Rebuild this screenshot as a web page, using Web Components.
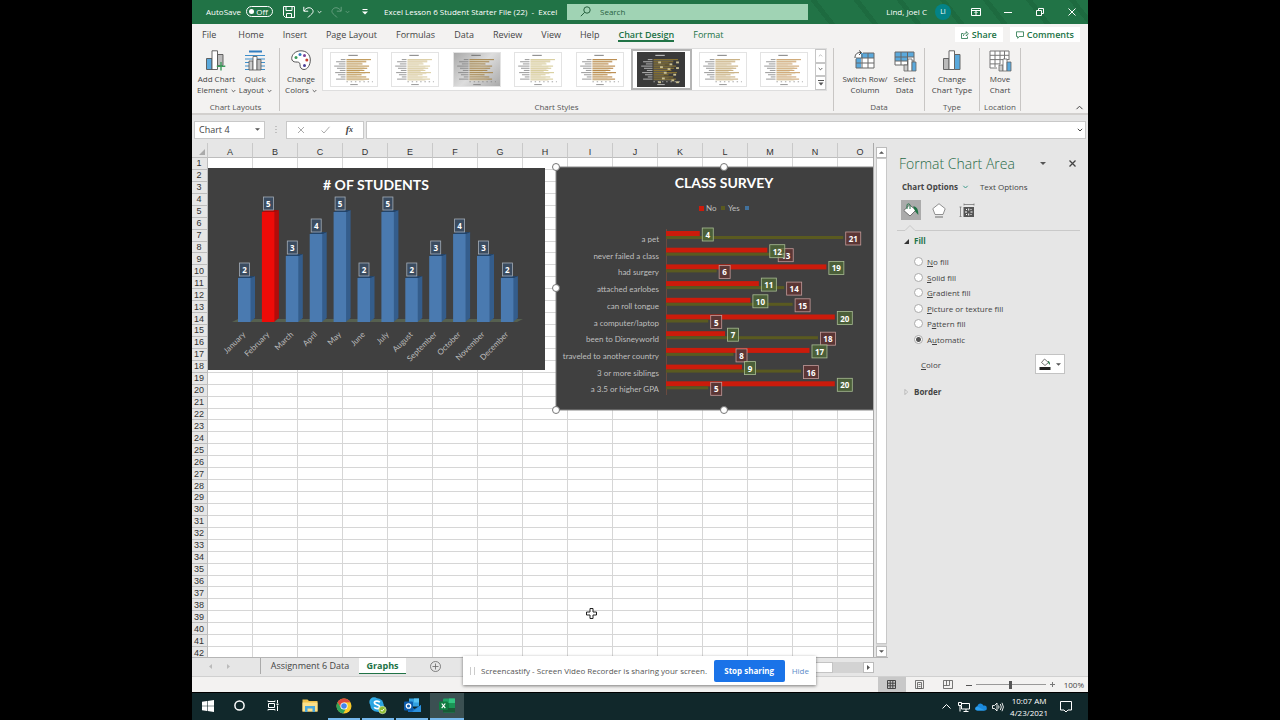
<!DOCTYPE html>
<html lang="en">
<head>
<meta charset="utf-8">
<title>Excel Lesson 6 Student Starter File (22) - Excel</title>
<style>
  html, body { height: 100%; margin: 0; }
  body {
    background: #000;
    color: #444;
    font: 8px/11px "Open Sans", "Noto Sans", sans-serif;
  }
</style>
</head>
<body>
<desktop-screen>
  <title-bar></title-bar>
  <ribbon-tabs></ribbon-tabs>
  <ribbon-panel></ribbon-panel>
  <formula-bar></formula-bar>
  <work-area>
    <sheet-grid>
      <students-chart></students-chart>
      <survey-chart></survey-chart>
    </sheet-grid>
    <sheet-tabs slot="tabs"></sheet-tabs>
    <format-pane slot="pane"></format-pane>
  </work-area>
  <status-bar></status-bar>
  <task-bar></task-bar>
  <share-notice slot="overlay"></share-notice>
</desktop-screen>

<script>
(function() {
  const BASE = `
    :host, *, *::before, *::after { box-sizing: border-box; }
    :host([hidden]) { display: none; }
    button, input { font: inherit; color: inherit; margin: 0; padding: 0; border: 0; background: none; }
    button { display: flex; align-items: center; justify-content: center; }
    a { color: inherit; text-decoration: none; }
    svg { display: block; flex: none; overflow: visible; }
  `;

  // define an element whose shadow root is a fixed piece of markup
  function define(name, css, html) {
    const template = document.createElement("template");
    template.innerHTML = `<style>${BASE}${css}</style>${html}`;
    customElements.define(name, class extends HTMLElement {
      constructor() {
        super();
        this.attachShadow({ mode: "open" });
        this.shadowRoot.appendChild(template.content.cloneNode(true));
      }
    });
  }

  const chevron = (w = 6, color = "currentColor") =>
    `<svg width="${w}" height="4" viewBox="0 0 6 4"><path d="M.8.8 3 3 5.2.8" fill="none" stroke="${color}"/></svg>`;
  const caret = (w = 6, color = "#555") =>
    `<svg width="${w}" height="3" viewBox="0 0 6 3"><path d="M0 0h6L3 3z" fill="${color}"/></svg>`;

  define("desktop-screen", `
    :host {
      display: grid;
      grid-template-rows: 24px 23px 68px 28px minmax(0, 1fr) 16px 28px;
      position: relative;
      height: 100vh;
      margin: 0 15%;
      overflow: hidden;
      background: #e6e6e6;
    }
    ::slotted([slot="overlay"]) { position: absolute; left: 271px; bottom: 35px; }
    .pointer { position: absolute; left: 394px; top: 608px; }
  `, `
    <slot></slot>
    <svg class="pointer" width="11" height="11" viewBox="0 0 11 11"><path d="M4 .5h3V4h3.500v3H7v3.500H4V7H.5V4H4z" fill="#fff" stroke="#222"/></svg>
    <slot name="overlay"></slot>
  `);

  define("title-bar", `
    :host {
      display: grid;
      grid-template-columns: 192fr 183fr 241fr 280fr;
      align-items: center;
      padding-bottom: 1px;
      background:
        repeating-linear-gradient(52deg, transparent 0 22px, rgba(0, 50, 20, .13) 22px 27px, transparent 27px 34px) right / 32% 100% no-repeat,
        #217346;
      color: #fff;
      white-space: nowrap;
    }
    .quick { display: flex; align-items: center; padding-left: 14px; }
    .toggle {
      width: 27px; height: 11px; margin: 0 10px 0 5px; padding: 0 4px 0 2px;
      border: 1px solid #fff; border-radius: 6px; justify-content: space-between;
    }
    .toggle::before { content: ""; width: 5px; height: 5px; border-radius: 50%; background: #fff; }
    .undo { margin-left: 8px; gap: 3px; }
    .redo { margin-left: 9px; gap: 3px; opacity: .3; }
    .more { margin-left: 12px; }
    .search {
      display: flex; align-items: center; gap: 9px; height: 16px; padding-left: 13px;
      background: #a0d3b4; color: #27613f;
    }
    .search input { flex: 1; min-width: 0; }
    .search input::placeholder { color: #27613f; opacity: 1; }
    .right { display: flex; align-items: center; justify-content: flex-end; padding-right: 11px; }
    .avatar {
      width: 16px; height: 16px; margin: 0 20px 0 8px; border-radius: 50%;
      background: #038387; font-size: 7px; line-height: 16px; text-align: center;
    }
    .right button { width: 10px; margin-left: 22px; }
    .right .avatar + button { margin-left: 0; }
  `, `
    <div class="quick">
      <span id="autosave">AutoSave</span>
      <button class="toggle" aria-labelledby="autosave">Off</button>
      <button aria-label="Save"><svg width="12" height="12" viewBox="0 0 12 12" fill="none" stroke="#fff"><path d="M.5.5h11v11h-9l-2-2zM3 .5v4h6v-4M3.500 11.500V7.500h5v4"/></svg></button>
      <button class="undo" aria-label="Undo"><svg width="11" height="12" viewBox="0 0 11 12" fill="none" stroke="#fff"><path d="M.8.8v4.400h4.400M1 5C3 1.500 7 .8 9 3s1 4-1 5.500L5 11.500"/></svg>${chevron(5)}</button>
      <button class="redo" aria-label="Redo"><svg width="11" height="12" viewBox="0 0 11 12" fill="none" stroke="#fff"><path d="M10.200.8v4.400H5.800M10 5C8 1.500 4 .8 2 3s-1 4 1 5.500l3 3"/></svg>${chevron(5)}</button>
      <button class="more" aria-label="Customize toolbar"><svg width="6" height="6" viewBox="0 0 6 6"><path d="M.5.5h5" stroke="#fff"/><path d="M0 2.500h6l-3 3z" fill="#fff"/></svg></button>
    </div>
    <div>Excel Lesson 6 Student Starter File (22)&nbsp; -&nbsp; Excel</div>
    <label class="search">
      <svg width="11" height="11" viewBox="0 0 11 11" fill="none" stroke="#27613f"><circle cx="7" cy="4" r="3.200"/><path d="M4.700 6.300.8 10.200"/></svg>
      <input type="text" placeholder="Search" aria-label="Search">
    </label>
    <div class="right">
      <span>Lind, Joel C</span>
      <span class="avatar">LI</span>
      <button aria-label="Ribbon display options"><svg width="10" height="8" viewBox="0 0 10 8" fill="none" stroke="#fff"><path d="M.5.5h9v7h-9zM.5 2.500h9M5 7V3.500M3.500 5 5 3.500 6.500 5"/></svg></button>
      <button aria-label="Minimize"><svg width="8" height="8" viewBox="0 0 8 8"><path d="M0 4.500h8" stroke="#fff"/></svg></button>
      <button aria-label="Restore"><svg width="8" height="8" viewBox="0 0 8 8" fill="none" stroke="#fff"><path d="M.5 2.500h5v5h-5zM2.500 2.500v-2h5v5h-2"/></svg></button>
      <button aria-label="Close"><svg width="8" height="8" viewBox="0 0 8 8"><path d="m.5.5 7 7m0-7-7 7" stroke="#fff"/></svg></button>
    </div>
  `);

  define("ribbon-tabs", `
    :host { display: flex; align-items: center; justify-content: space-between; padding: 0 8px 2px 10px; background: #f3f2f1; font-size: 9px; }
    nav { display: flex; gap: 19px; }
    nav a:first-child { margin-right: 3px; }
    .context { color: #217346; }
    [aria-current] { font-weight: 600; box-shadow: 0 2px #217346; }
    .actions { display: flex; gap: 7px; color: #217346; font-weight: 600; }
    .actions button { height: 15px; padding: 0 6px; gap: 3px; background: #fff; }
  `, `
    <nav>
      <a href="#">File</a><a href="#">Home</a><a href="#">Insert</a><a href="#">Page Layout</a>
      <a href="#">Formulas</a><a href="#">Data</a><a href="#">Review</a><a href="#">View</a><a href="#">Help</a>
      <a href="#" class="context" aria-current="page">Chart Design</a><a href="#" class="context">Format</a>
    </nav>
    <div class="actions">
      <button><svg width="8" height="8" viewBox="0 0 8 8" fill="none" stroke="#217346" stroke-width=".8"><path d="M2.500 2.500h-2v5h6v-2M2.300 5c.3-2 1.500-2.800 3-2.800V.6l2 2.200-2 2.200V3.600"/></svg>Share</button>
      <button><svg width="8" height="8" viewBox="0 0 8 8" fill="none" stroke="#217346" stroke-width=".8"><path d="M.5.8h7v4.700H3.200L1.700 7.300V5.500H.5z"/></svg>Comments</button>
    </div>
  `);

  define("ribbon-group", `
    :host {
      display: flex; flex-direction: column; justify-content: space-between;
      height: 63px; border-right: 1px solid #c8c6c4;
    }
    .items { display: flex; justify-content: center; }
    .caption { text-align: center; line-height: 9px; color: #555; }
  `, `
    <div class="items"><slot></slot></div>
    <div class="caption"><slot name="caption"></slot></div>
  `);

  define("ribbon-button", `
    :host { display: block; }
    button { flex-direction: column; width: 100%; padding-top: 2px; gap: 2px; white-space: nowrap; text-align: center; }
  `, `<button><slot name="icon"></slot><span><slot></slot></span></button>`);

  customElements.define("style-thumb", class extends HTMLElement {
    constructor() {
      super();
      this.attachShadow({ mode: "open" });
      let dark = this.hasAttribute("dark");
      let bars = [26, 21, 17, 24, 22, 19, 25, 16, 21, 24];
      let ink = dark ? "#ddd" : "#777";
      let tone = this.getAttribute("tone") || "#c09a5b";
      let art = bars.map((w, i) => {
        let y = 7 + i * 2.3;
        let name = 5 + (i * 5) % 8;
        return `<path d="M${15 - name} ${y}h${name}" stroke="${ink}" stroke-width=".8"/>` +
          `<path d="M16 ${y}h${w}" stroke="${tone}" stroke-width="1.200"/>` +
          `<path d="M16 ${y + 1.1}h${w - 5}" stroke="#d9c9a0" stroke-width=".8" opacity="${dark ? .3 : .8}"/>`;
      }).join("");
      if (dark) {
        art += [[22, 10], [41, 10], [24, 15], [34, 12], [32, 17], [28, 21], [41, 16], [38, 23], [26, 27], [41, 31], [22, 31], [36, 29]]
          .map(([x, y]) => `<rect x="${x - 1}" y="${y - 1}" width="3" height="2" fill="#c9bf91"/>`).join("");
      }
      this.shadowRoot.innerHTML = `
        <style>${BASE}
          :host { display: block; flex: 1; }
          button { width: 100%; height: 41px; border: 2px solid transparent; }
          :host([dark]) button { border-color: #b5b5b5; }
          svg { border: 1px solid #e3e3e3; background: #fff; }
          :host([gray]) svg { background: linear-gradient(135deg, #aaa, #ddd 50%, #aaa); }
          :host([dark]) svg { background: #3a3a3a; border-color: #3a3a3a; }
        </style>
        <button aria-label="Chart style"><svg width="48" height="35" viewBox="0 0 48 35">
          <path d="M18 2.500h10" stroke="${dark ? "#fff" : "#555"}" stroke-width=".8"/>${art}
          <path d="M16 30.500h28" stroke="${ink}" stroke-width=".7" stroke-dasharray="1.500 3"/>
          <path d="M20 33.500h8" stroke="${ink}" stroke-width=".8"/></svg></button>`;
    }
  });

  const bars = (x, y, blue) => `<g stroke="#666" stroke-width=".8"><path d="M${x} ${y + 6}h4v6h-4z" fill="#ccc"/><path d="M${x + 4} ${y}h4v12h-4z" fill="#fff"/><path d="M${x + 8} ${y + 3}h4v9h-4z" fill="${blue}"/></g>`;

  define("ribbon-panel", `
    :host { display: flex; align-items: flex-start; padding-top: 1px; background: #f3f2f1; border-bottom: 2px solid #d2d0ce; }
    .layouts { width: 88px; }
    .styles { flex: 1; }
    .data { width: 91px; }
    .type { width: 55px; }
    .location { width: 41px; }
    .quick { margin: 0 2px 0 3px; }
    .colors { width: 42px; }
    .select { margin-left: 6px; }
    .end { display: flex; align-items: flex-end; justify-content: flex-end; width: 67px; height: 62px; padding: 0 5px 0; }
    .arrow { display: inline-block; margin-left: 3px; vertical-align: middle; }
    .gallery { display: flex; align-items: center; flex: 1; height: 43px; margin-right: 6px; border: 1px solid #dedede; background: #fff; }
    .steps { display: grid; grid-template-rows: repeat(3, 1fr); width: 11px; height: 41px; }
    .steps button { border: 1px solid #c6c6c6; }
  `, `
    <ribbon-group class="layouts">
      <ribbon-button><svg slot="icon" width="20" height="21" viewBox="0 0 20 21"><g stroke="#555" stroke-width=".9"><path d="M.5 8.500h5.500v11H.5z" fill="#5aa9dc"/><path d="M6 .8h5.500v18.700H6z" fill="#fff"/><path d="M11.500 4.500H17v11h-5.500z" fill="#bbb"/></g><path d="M15 12v8.500M10.800 16.300h8.500" stroke="#3c9c5c" stroke-width="1.400"/></svg>Add Chart<br>Element<svg class="arrow" width="5" height="4" viewBox="0 0 6 4"><path d="M.8.8 3 3 5.200.8" fill="none" stroke="#444"/></svg></ribbon-button>
      <ribbon-button class="quick"><svg slot="icon" width="20" height="21" viewBox="0 0 20 21"><path d="M4 .5h13v2H4z" fill="#2f7dc0"/><path d="M0 5.500h20M0 9h20M0 12.500h20M0 16h20M0 19.500h20" stroke="#3f8fca"/><g stroke="#555" stroke-width=".8"><path d="M4 11h4v9H4z" fill="#ccc"/><path d="M8 6.500h4V20H8z" fill="#fff"/><path d="M12 9.500h4V20h-4z" fill="#bbb"/></g></svg>Quick<br>Layout<svg class="arrow" width="5" height="4" viewBox="0 0 6 4"><path d="M.8.8 3 3 5.200.8" fill="none" stroke="#444"/></svg></ribbon-button>
      <span slot="caption">Chart Layouts</span>
    </ribbon-group>
    <ribbon-group class="styles">
      <ribbon-button class="colors"><svg slot="icon" width="20" height="21" viewBox="0 0 20 21"><path d="M10 .8C4 .8.7 5 .7 8.500c0 2.400 2 3.500 4 3.500 2.600 0 4.300.2 4.300 2.500 0 2.500.8 5 4 5 3.500 0 6.300-4.500 6.300-9.500C19.300 4.500 15.500.8 10 .8z" fill="#fff" stroke="#555"/><circle cx="5" cy="7.500" r="1.500" fill="#3c9c5c"/><circle cx="9" cy="4.500" r="1.500" fill="#2f7dc0"/><circle cx="13.500" cy="5.500" r="1.500" fill="#7b3f98"/><circle cx="15.800" cy="10" r="1.500" fill="#c63d2f"/><circle cx="13.500" cy="15.500" r="1.500" fill="#4b3f98"/></svg>Change<br>Colors<svg class="arrow" width="5" height="4" viewBox="0 0 6 4"><path d="M.8.8 3 3 5.200.8" fill="none" stroke="#444"/></svg></ribbon-button>
      <div class="gallery">
        <style-thumb></style-thumb><style-thumb tone="#dccfa6"></style-thumb><style-thumb gray tone="#a88a55"></style-thumb><style-thumb tone="#d9cf9f"></style-thumb>
        <style-thumb tone="#b98a4c"></style-thumb><style-thumb dark tone="#8a7431"></style-thumb><style-thumb tone="#c9b184"></style-thumb><style-thumb tone="#cfa877"></style-thumb>
        <div class="steps">
          <button aria-label="Previous styles"><svg width="5" height="3" viewBox="0 0 6 4"><path d="M.8 3.200 3 1l2.200 2.200" fill="none" stroke="#aaa"/></svg></button>
          <button aria-label="Next styles">${chevron(5, "#444")}</button>
          <button aria-label="More styles"><svg width="6" height="6" viewBox="0 0 6 6"><path d="M0 .5h6" stroke="#555"/><path d="M.5 2.500h5l-2.500 3z" fill="#555"/></svg></button>
        </div>
      </div>
      <span slot="caption">Chart Styles</span>
    </ribbon-group>
    <ribbon-group class="data">
      <ribbon-button><svg slot="icon" width="22" height="21" viewBox="0 0 22 21"><path d="M2 3h18v15H2z" fill="#fff"/><path d="M7 3h13v5H7zM2 8h5v10H2z" fill="#5aa9dc"/><path d="M2 9v9h18V3H9M2 8h18M2 13h18M8 4v14M14 3v15" fill="none" stroke="#666"/><path d="M1 8c0-4 2-5.500 6-5.500M5 .5l2.500 2L5 5" fill="none" stroke="#444"/></svg>Switch Row/<br>Column</ribbon-button>
      <ribbon-button class="select"><svg slot="icon" width="22" height="21" viewBox="0 0 22 21"><path d="M1 2h19v13H1z" fill="#fff"/><path d="M1 2h19v5H1zM1 7h12v4H1z" fill="#5aa9dc"/><path d="M1 2h19v13H1zM1 7h19M1 11h19M7 2v13M13.500 2v13" fill="none" stroke="#666"/>${bars(10, 9, "#5aa9dc")}</svg>Select<br>Data</ribbon-button>
      <span slot="caption">Data</span>
    </ribbon-group>
    <ribbon-group class="type">
      <ribbon-button><svg slot="icon" width="20" height="21" viewBox="0 0 20 21" stroke="#666"><path d="M1.500 8.500H7v11H1.500z" fill="#bbb"/><path d="M7 .8h5.500v18.700H7z" fill="#fff"/><path d="M12.500 4.500H18v15h-5.500z" fill="#5aa9dc"/></svg>Change<br>Chart Type</ribbon-button>
      <span slot="caption">Type</span>
    </ribbon-group>
    <ribbon-group class="location">
      <ribbon-button><svg slot="icon" width="22" height="21" viewBox="0 0 22 21"><path d="M1 1h19v15h-9l-3 2.500H1z" fill="#fff"/><path d="M20 10V1H1v17h7M1 5.300h19M1 9.600h19M1 13.900h10M6 1v16M11 1v13M15.500 1v9" fill="none" stroke="#777"/>${bars(10, 9, "#5aa9dc")}</svg>Move<br>Chart</ribbon-button>
      <span slot="caption">Location</span>
    </ribbon-group>
    <div class="end"><button aria-label="Collapse ribbon"><svg width="7" height="5" viewBox="0 0 7 5"><path d="m.5 4.200 3-3 3 3" fill="none" stroke="#444"/></svg></button></div>
  `);

  define("formula-bar", `
    :host { display: flex; align-items: center; padding: 1px 2px 0; background: #e6e6e6; }
    .box { display: flex; align-items: center; height: 18px; border: 1px solid #c8c8c8; background: #fff; }
    .name { width: 71px; padding: 0 4px 0 4px; }
    .name input { flex: 1; min-width: 0; font-size: 9px; }
    .grip { width: 21px; display: flex; justify-content: center; }
    .tools { width: 78px; justify-content: space-around; padding: 0 2px; }
    .formula { flex: 1; margin-left: 2px; padding: 0 2px 0 5px; }
    .formula input { flex: 1; min-width: 0; }
    .fx { font: italic bold 10px/12px "Liberation Serif", serif; }
    .fx small { font-size: 8px; }
  `, `
    <div class="box name"><input type="text" value="Chart 4" aria-label="Name box"><button aria-label="Names">${caret(5)}</button></div>
    <div class="grip"><svg width="2" height="8" viewBox="0 0 2 8"><path d="M1 0v8" stroke="#999" stroke-dasharray="1 2"/></svg></div>
    <div class="box tools">
      <button aria-label="Cancel"><svg width="8" height="8" viewBox="0 0 8 8"><path d="m1 1 6 6m0-6L1 7" stroke="#aaa"/></svg></button>
      <button aria-label="Enter"><svg width="9" height="8" viewBox="0 0 9 8"><path d="m.5 4.500 2.500 2.500L8.500.8" fill="none" stroke="#aaa"/></svg></button>
      <button class="fx" aria-label="Insert function">f<small>x</small></button>
    </div>
    <div class="box formula"><input type="text" aria-label="Formula"><button aria-label="Expand formula bar">${chevron(6, "#444")}</button></div>
  `);

  define("work-area", `
    :host { display: grid; grid-template-columns: minmax(0, 1fr) 200px; min-height: 0; }
    .book { display: grid; grid-template-rows: minmax(0, 1fr) 19px; min-height: 0; }
    .sheet { display: grid; grid-template-columns: minmax(0, 1fr) 14px; min-height: 0; }
    .scroll { display: flex; flex-direction: column; margin: 4px 1px 0 2px; }
    .scroll button { height: 11px; border: 1px solid #bbb; background: #fff; }
    .thumb { flex: 0 0 486px; border: 1px solid #c8c8c8; background: #fff; }
    .rest { flex: 1; background: #d8d8d8; }
  `, `
    <div class="book">
      <div class="sheet">
        <slot></slot>
        <div class="scroll">
          <button aria-label="Scroll up"><svg width="5" height="3" viewBox="0 0 6 3"><path d="M0 3h6L3 0z" fill="#555"/></svg></button>
          <div class="thumb"></div><div class="rest"></div>
          <button aria-label="Scroll down">${caret(5)}</button>
        </div>
      </div>
      <slot name="tabs"></slot>
    </div>
    <slot name="pane"></slot>
  `);

  const ROWS = 42;
  const COLUMNS = "ABCDEFGHIJKLMNO".split("");

  customElements.define("sheet-grid", class extends HTMLElement {
    constructor() {
      super();
      this.attachShadow({ mode: "open" });
      let cells = "<td></td>".repeat(COLUMNS.length);
      let rows = Array.from({ length: ROWS }, (_, i) => `<tr><th scope="row">${i + 1}</th>${cells}</tr>`).join("");
      this.shadowRoot.innerHTML = `
        <style>${BASE}
          :host { display: block; position: relative; min-height: 0; overflow: hidden; border-right: 1px solid #aaa; background: #fff; }
          table { display: grid; grid-template-rows: 15px 1fr; height: calc(100% + 2px); }
          tbody { display: grid; grid-template-rows: repeat(${ROWS}, minmax(0, 1fr)); }
          tr { display: grid; grid-template-columns: 16px repeat(${COLUMNS.length}, 45px); min-height: 0; }
          th, td { padding: 0; min-height: 0; border: 0 solid #d6d6d6; border-width: 0 1px 1px 0; }
          th {
            display: flex; align-items: center; justify-content: center;
            background: #e6e6e6; border-color: #bdbdbd; color: #333;
            font: 9px/10px "Liberation Sans", Arial, sans-serif;
          }
          thead th { border-right-color: #c9c9c9; padding-top: 4px; }
          thead th:first-child { justify-content: flex-end; padding-right: 2px; }
          tbody th { padding-right: 1px; }
        </style>
        <table>
          <thead><tr><th aria-label="Select all"><svg width="6" height="6" viewBox="0 0 6 6"><path d="M6 0v6H0z" fill="#aaa"/></svg></th>${COLUMNS.map(c => `<th scope="col">${c}</th>`).join("")}</tr></thead>
          <tbody>${rows}</tbody>
        </table>
        <slot></slot>`;
    }
  });

  const MONTHS = [
    ["January", 2], ["February", 5], ["March", 3], ["April", 4], ["May", 5], ["June", 2],
    ["July", 5], ["August", 2], ["September", 3], ["October", 4], ["November", 3], ["December", 2]
  ];

  customElements.define("students-chart", class extends HTMLElement {
    constructor() {
      super();
      this.attachShadow({ mode: "open" });
      let columns = MONTHS.map(([month, n], i) => {
        let x = 30 + i * 23.9, top = 154 - n * 22;
        let [face, side, cap] = month === "February" ? ["#ee0b08", "#b00d0b", "#a80a08"] : ["#4a7ab0", "#345d8c", "#234469"];
        return `
          <path d="M${x + 12} ${top}l5-2v${n * 22 - 2}l-5 4z" fill="${side}"/>
          <path d="M${x} ${top}l4-2h13l-4 2z" fill="${cap}"/>
          <rect x="${x}" y="${top}" width="12.500" height="${n * 22}" fill="${face}"/>
          <rect x="${x + 1.5}" y="${top - 15}" width="10" height="13" fill="#3b4c60" stroke="#a3adb8" stroke-width=".8"/>
          <text class="value" x="${x + 6.5}" y="${top - 5}">${n}</text>
          <text class="month" transform="translate(${x + 8} 167) rotate(-45)">${month}</text>`;
      }).join("");
      this.shadowRoot.innerHTML = `
        <style>${BASE}
          :host { display: block; position: absolute; left: 16px; top: 25px; background: #404040; }
          text { font-family: Lato, "Open Sans", sans-serif; }
          .title { font-size: 14px; font-weight: 700; fill: #fff; text-anchor: middle; }
          .value { font: 700 8px "Open Sans", sans-serif; fill: #fff; text-anchor: middle; }
          .month { font-size: 8px; fill: #bdbdbd; text-anchor: end; }
        </style>
        <svg width="337" height="202" viewBox="0 0 337 202">
          <text class="title" x="168" y="22"># OF STUDENTS</text>
          <path d="M24 154l6-3h285l-6 3z" fill="#56604f"/>
          ${columns}
        </svg>`;
    }
  });

  // answer, no, yes
  const ANSWERS = [
    ["a pet", 4, 21], ["never failed a class", 12, 13], ["had surgery", 19, 6], ["attached earlobes", 11, 14],
    ["can roll tongue", 10, 15], ["a computer/laptop", 20, 5], ["been to Disneyworld", 7, 18],
    ["traveled to another country", 17, 8], ["3 or more siblings", 9, 16], ["a 3.5 or higher GPA", 20, 5]
  ];

  customElements.define("survey-chart", class extends HTMLElement {
    box(kind, n, y) {
      return `<rect class="${kind}" x="${112.5 + n * 8.44}" y="${y - 7}" width="${n > 9 ? 15 : 11}" height="13"/>`;
    }

    value(n, y) {
      return `<text class="value" x="${112.5 + n * 8.44 + (n > 9 ? 7.5 : 5.5)}" y="${y + 3}">${n}</text>`;
    }

    constructor() {
      super();
      this.attachShadow({ mode: "open" });
      let lines = ANSWERS.map(([answer, no, yes], i) => {
        let y = 67 + i * 16.7;
        return `
          <text class="answer" x="103" y="${y + 8}">${answer}</text>
          <rect x="110" y="${y - 3}" width="${no * 8.44}" height="5" fill="#cc1b0b"/>
          <rect x="110" y="${y + 2}" width="${yes * 8.44}" height="3" fill="#5a5a20"/>
          ${this.box("yes", yes, y + 5)}${this.value(yes, y + 5)}
          ${this.box("no", no, y + 1)}${this.value(no, y + 1)}`;
      }).join("");
      let handles = [[0, 0], [168, 0], [0, 121], [0, 243], [168, 243]]
        .map(([x, y]) => `<circle cx="${x}" cy="${y}" r="3.500" fill="#fff" stroke="#777"/>`).join("");
      this.shadowRoot.innerHTML = `
        <style>${BASE}
          :host { display: block; position: absolute; left: 364px; top: 24px; background: #404040; }
          text { font-family: Lato, "Open Sans", sans-serif; }
          .title { font-size: 14px; font-weight: 700; fill: #fff; text-anchor: middle; }
          .value { font: 700 8px "Open Sans", sans-serif; fill: #fff; text-anchor: middle; }
          .answer { font-size: 8px; fill: #bfbfbf; text-anchor: end; }
          .legend { font-size: 8px; fill: #bfbfbf; }
          .no { fill: #4f6a37; fill-opacity: .75; stroke: #a9bd93; stroke-width: .8; }
          .yes { fill: #5b3635; stroke: #c49b9a; stroke-width: .8; }
        </style>
        <svg width="336" height="243" viewBox="0 0 336 243">
          <path d="M0 0h336v243H0z" fill="none" stroke="#888"/>
          <text class="title" x="168" y="21">CLASS SURVEY</text>
          <rect x="143" y="39" width="5" height="5" fill="#cc1b0b"/><text class="legend" x="150" y="44">No</text>
          <rect x="165" y="39" width="4" height="4" fill="#5a5a20"/><text class="legend" x="172" y="44">Yes</text>
          <rect x="189" y="39" width="4" height="4" fill="#41719c"/>
          <path d="M110.500 62v166" stroke="#6b4a40"/>
          ${lines}
          ${handles}
        </svg>`;
    }
  });

  define("sheet-tabs", `
    :host { display: flex; align-items: flex-start; height: 19px; border-top: 1px solid #b5b5b5; background: #e6e6e6; font-size: 9px; }
    .nav { display: flex; gap: 15px; align-items: center; width: 69px; height: 16px; padding-left: 17px; border-right: 1px solid #aaa; }
    a { display: block; height: 16px; line-height: 16px; }
    .data { width: 98px; text-align: center; }
    .active { width: 47px; background: #fff; border-bottom: 1px solid #217346; color: #217346; font-weight: 700; text-align: center; }
    .add { width: 12px; height: 17px; margin-left: 23px; }
    .scroll { display: flex; align-items: center; width: 200px; height: 11px; margin: 4px 14px 0 auto; background: #d3d3d3; }
    .thumb { width: 159px; height: 11px; margin-right: auto; border: 1px solid #c4c4c4; background: #fff; }
    .scroll button { width: 11px; height: 11px; border: 1px solid #bbb; background: #fff; }
  `, `
    <div class="nav">
      <svg width="3" height="5" viewBox="0 0 3 5"><path d="M3 0v5L0 2.500z" fill="#bbb"/></svg>
      <svg width="3" height="5" viewBox="0 0 3 5"><path d="M0 0v5l3-2.500z" fill="#bbb"/></svg>
    </div>
    <a class="data" href="#">Assignment 6 Data</a>
    <a class="active" href="#" aria-current="page">Graphs</a>
    <button class="add" aria-label="New sheet"><svg width="11" height="11" viewBox="0 0 11 11" fill="none" stroke="#666" stroke-width=".8"><circle cx="5.500" cy="5.500" r="5"/><path d="M5.500 2.500v6M2.500 5.500h6"/></svg></button>
    <div class="scroll"><div class="thumb"></div><button aria-label="Scroll right"><svg width="3" height="5" viewBox="0 0 3 5"><path d="M0 0v5l3-2.500z" fill="#555"/></svg></button></div>
  `);

  define("format-pane", `
    :host { display: block; padding: 11px 8px 0 9px; background: #e6e6e6; }
    header { display: flex; align-items: center; padding: 0 4px 0 2px; }
    h2 { flex: 1; margin: 0; font: 300 14px/19px "Open Sans", "Noto Sans", sans-serif; color: #2a6b48; white-space: nowrap; }
    header button { width: 8px; height: 14px; }
    header button + button { margin-left: 21px; }
    .modes { display: flex; align-items: center; margin-top: 8px; padding-left: 5px; }
    .modes button { gap: 4px; }
    .modes .active { margin-right: 11px; font-weight: 700; }
    .icons { display: flex; gap: 8px; margin-top: 8px; padding-left: 4px; }
    .icons button { width: 20px; height: 20px; }
    .icons .active { background: #ababab; }
    .rule { display: block; width: 100%; height: 8px; margin-top: 3px; }
    h3 { display: flex; align-items: center; gap: 5px; margin: 0; padding-left: 7px; font: 700 8px/12px "Open Sans", "Noto Sans", sans-serif; }
    h3 svg { width: 5px; }
    .fill { margin-top: 4px; color: #217346; }
    fieldset { display: grid; grid-auto-rows: 1fr; height: 93px; margin: 7px 0 0; padding: 0 0 0 17px; border: 0; }
    label { display: flex; align-items: center; gap: 4px; }
    input[type="radio"] { appearance: none; width: 9px; height: 9px; border: 1px solid #aaa; border-radius: 50%; background: #fff; }
    input[type="radio"]:checked { background: radial-gradient(circle, #555 2px, #fff 3px); }
    .color { display: flex; align-items: center; justify-content: space-between; margin: 7px 15px 12px 24px; }
    .color button { width: 30px; height: 20px; gap: 5px; border: 1px solid #c3c3c3; background: #fff; }
  `, `
    <header>
      <h2>Format Chart Area</h2>
      <button aria-label="Pane options">${caret(6)}</button>
      <button aria-label="Close pane"><svg width="7" height="7" viewBox="0 0 7 7"><path d="m.5.5 6 6m0-6-6 6" stroke="#444" stroke-width="1.300"/></svg></button>
    </header>
    <div class="modes"><button class="active">Chart Options ${chevron(7, "#3a9a8a")}</button><button>Text Options</button></div>
    <div class="icons">
      <button class="active" aria-label="Fill and line"><svg width="16" height="14" viewBox="0 0 16 14"><path d="M6.500 2 13 7l-6 6L.8 7.500z" fill="#fff" stroke="#555" stroke-width=".8"/><path d="M4 6V2.500C4 .3 7 .3 7 2.500V6" fill="none" stroke="#217346"/><path d="M10 3.500c3-.5 5.500 2 5.300 8.500l-3-3.500z" fill="#217346"/></svg></button>
      <button aria-label="Effects"><svg width="14" height="15" viewBox="0 0 14 15"><path d="m7 .7 6.200 5L11 11.500H3L.8 5.700z" fill="#fff" stroke="#777" stroke-width=".8"/><path d="M3 14h8" stroke="#aaa" stroke-width="2"/></svg></button>
      <button aria-label="Size and properties"><svg width="14" height="14" viewBox="0 0 14 14"><path d="M.5 4v9.500m-1-9.500h2m-2 9.500h2M4 1.500h10M4 .5v2M14 .5v2" stroke="#777" stroke-width=".8"/><path d="M3.500 4H14v10H3.500z" fill="#555"/><path d="M8.700 5.500v2m0 3v2M5 9h2m3.500 0h2M6 6.500h1m3.500 0h1M6 11.500h1m3.500 0h1" stroke="#fff"/></svg></button>
    </div>
    <svg class="rule" preserveAspectRatio="none"><path d="M0 7.500h8l5-5 5 5h165" fill="none" stroke="#c9c9c9"/></svg>
    <h3 class="fill"><svg width="5" height="5" viewBox="0 0 5 5"><path d="M5 0v5H0z" fill="#333"/></svg>Fill</h3>
    <fieldset aria-label="Fill">
      <label><input type="radio" name="fill"><span><u>N</u>o fill</span></label>
      <label><input type="radio" name="fill"><span><u>S</u>olid fill</span></label>
      <label><input type="radio" name="fill"><span><u>G</u>radient fill</span></label>
      <label><input type="radio" name="fill"><span><u>P</u>icture or texture fill</span></label>
      <label><input type="radio" name="fill"><span>P<u>a</u>ttern fill</span></label>
      <label><input type="radio" name="fill" checked><span>A<u>u</u>tomatic</span></label>
    </fieldset>
    <div class="color"><span><u>C</u>olor</span><button aria-label="Color"><svg width="12" height="12" viewBox="0 0 12 12"><path d="m5.500 1 4 3.500-3.500 3-3.500-3z" fill="#fff" stroke="#555" stroke-width=".8"/><path d="M9 3c1.500.2 2 1.500 2 4L9.200 5z" fill="#217346"/><path d="M.5 9h11v3H.5z" fill="#222"/></svg>${caret(5)}</button></div>
    <h3><svg width="4" height="6" viewBox="0 0 4 6"><path d="M.5.5v5L3 3z" fill="#fff" stroke="#999" stroke-width=".7"/></svg>Border</h3>
  `);

  define("status-bar", `
    :host { display: flex; align-items: center; justify-content: flex-end; padding-right: 4px; border-top: 1px solid #d0d0d0; background: #f3f2f1; }
    .view { width: 28px; height: 15px; }
    .active { background: #c8c8c8; }
    .zoom { display: flex; align-items: center; gap: 4px; margin: 0 8px 0 4px; }
    .zoom button { width: 6px; height: 8px; }
    input { appearance: none; width: 70px; height: 8px; background: linear-gradient(#999, #999) center / 100% 1px no-repeat; }
    input::-webkit-slider-thumb { appearance: none; width: 3px; height: 8px; background: #555; }
  `, `
    <button class="view active" aria-label="Normal view"><svg width="9" height="9" viewBox="0 0 9 9"><path d="M.5.5h8v8h-8zM.5 3.200h8M.5 5.800h8M3.200.5v8M5.800.5v8" fill="none" stroke="#444"/></svg></button>
    <button class="view" aria-label="Page layout view"><svg width="9" height="9" viewBox="0 0 9 9"><path d="M.5.5h8v8h-8zM2.500 2.500h4v6h-4zM3.500 4.500h2m-2 2h2" fill="none" stroke="#555" stroke-width=".8"/></svg></button>
    <button class="view" aria-label="Page break view"><svg width="10" height="9" viewBox="0 0 10 9"><path d="M.5.5h9v8h-9zM.5 5.500h6v-5M3.500.5v5" fill="none" stroke="#555" stroke-width=".8"/></svg></button>
    <div class="zoom">
      <button aria-label="Zoom out"><svg width="6" height="6" viewBox="0 0 6 6"><path d="M0 3.500h6" stroke="#555"/></svg></button>
      <input type="range" min="0" max="200" value="100" aria-label="Zoom">
      <button aria-label="Zoom in"><svg width="5" height="5" viewBox="0 0 5 5"><path d="M0 2.500h5M2.500 0v5" stroke="#777"/></svg></button>
    </div>
    <span>100%</span>
  `);

  define("task-bar", `
    :host { display: flex; justify-content: space-between; border-top: 1px solid #000; background: #11282b; color: #fff; }
    .apps, .tray { display: flex; }
    .apps button { width: 34px; border-bottom: 2px solid transparent; }
    .apps .plain { width: 33px; }
    .apps .plain:first-child { width: 31px; }
    .apps .gap { margin-left: 4px; }
    .apps .open { border-image: linear-gradient(90deg, transparent 3px, #76b9ed 3px calc(100% - 3px), transparent 0) 2; }
    .apps .current { margin-left: 1px; background: #3b5052; border-color: #76b9ed; }
    .tray { align-items: center; padding-right: 16px; }
    .tray button { width: 17px; }
    .tray .news { width: 12px; }
    time { margin: 0 12px 0 4px; text-align: center; line-height: 12px; }
  `, `
    <div class="apps">
      <button class="plain" aria-label="Start"><svg width="12" height="12" viewBox="0 0 12 12"><path d="m0 1.700 5-.7v4.700H0zM5.600.9 12 0v5.700H5.600zM0 6.300h5V11l-5-.7zM5.600 6.300H12V12l-6.400-.9z" fill="#fff"/></svg></button>
      <button class="plain" aria-label="Cortana"><svg width="11" height="11" viewBox="0 0 11 11"><circle cx="5.500" cy="5.500" r="4.600" fill="none" stroke="#fff" stroke-width="1.500"/></svg></button>
      <button class="plain" aria-label="Task view"><svg width="12" height="11" viewBox="0 0 12 11" fill="none" stroke="#fff"><path d="M1 .5v1h7v-1M1.500 3.500h6v4h-6zM1 10.500v-1h7v1M10.500 0v3M10.500 5.500V11"/><path d="M9.500 4.300h2" stroke-width="1.500"/></svg></button>
      <button class="gap" aria-label="File Explorer"><svg width="16" height="13" viewBox="0 0 16 13"><path d="M.5.500h5l1.500 1.500h8.500v10.500H.5z" fill="#f0c14b"/><path d="M.5 3.500h15v9H.5z" fill="#fbe08a"/><path d="M3 7h10v6h-2.500V9.500h-5V13H3z" fill="#4aa8dc"/></svg></button>
      <button class="open" aria-label="Chrome"><svg width="16" height="16" viewBox="0 0 16 16"><circle cx="8" cy="8" r="7.500" fill="#f9c929"/><path d="M1.500 4.300A7.500 7.500 0 0 1 14.500 4.300L8 4.500 5 9.800z" fill="#dd4a3c"/><path d="M1.500 4.300 5 10l4.500 1.500-2.300 4A7.500 7.500 0 0 1 1.500 4.300z" fill="#30a35b"/><circle cx="8" cy="8" r="3.600" fill="#fff"/><circle cx="8" cy="8" r="2.800" fill="#4384ee"/></svg></button>
      <button class="open" aria-label="Skype"><svg width="18" height="17" viewBox="0 0 18 17"><circle cx="5" cy="5" r="4.700" fill="#35aee8"/><circle cx="10.500" cy="10.500" r="4.700" fill="#1c8fd6"/><circle cx="8" cy="8" r="6.700" fill="#2aa5e2"/><path d="M10.800 5.300C9.500 3.500 5.300 3.700 5.400 5.900c.1 2.300 5.300 1.500 5.200 4 0 2.200-4 2.200-5.400.3" fill="none" stroke="#fff" stroke-width="1.700"/><circle cx="13.500" cy="13" r="3.700" fill="#8cbd30" stroke="#e4f0c8" stroke-width=".6"/><path d="m11.800 13 1.300 1.300 2.200-2.600" fill="none" stroke="#fff"/></svg></button>
      <button class="open" aria-label="Outlook"><svg width="17" height="15" viewBox="0 0 17 15"><path d="M5 .5h10v8H5z" fill="#32a0e0"/><path d="M10 .5h5v4h-5z" fill="#59c3f2"/><path d="M4 7l6.500 4L17 7v7H4z" fill="#1670c4"/><path d="m17 7-9 7h9z" fill="#2b91dd"/><rect y="3.500" width="9" height="9" rx="1" fill="#0d5cab"/><circle cx="4.500" cy="8" r="2.200" fill="none" stroke="#fff" stroke-width="1.300"/></svg></button>
      <button class="current" aria-label="Excel"><svg width="16" height="15" viewBox="0 0 16 15"><rect x="4" y=".5" width="12" height="14" rx="1" fill="#21a366"/><path d="M10 .5h6V5h-6z" fill="#33c481"/><path d="M4 5h6v5H4z" fill="#107c41"/><path d="M4 10h12v4.500H4z" fill="#185c37"/><path d="M10 5h6v5h-6z" fill="#1a9455"/><rect y="3.500" width="9" height="8.500" rx="1" fill="#107c41"/><path d="m2.700 5.500 3.600 4.700m0-4.700L2.700 10.200" stroke="#fff" stroke-width="1.200"/></svg></button>
    </div>
    <div class="tray">
      <button aria-label="Hidden icons"><svg width="9" height="5" viewBox="0 0 9 5"><path d="m.5 4.500 4-4 4 4" fill="none" stroke="#fff"/></svg></button>
      <button aria-label="Network"><svg width="12" height="10" viewBox="0 0 12 10" fill="none" stroke="#fff"><path d="M4 1.500h7.500v5.500H3.500V4M5.500 9.500h5M8 7v2.500M.5.5h3v3h-3zM2 3.500v6"/></svg></button>
      <button aria-label="OneDrive"><svg width="12" height="8" viewBox="0 0 12 8"><path d="M2.500 7.500C-.5 7.500-.3 3.800 2.300 3.500 3-.2 7-.3 8.200 2.500 11 2 12 3.500 11.700 5c.5 1.500-.5 2.500-1.700 2.500z" fill="#1b8add"/><path d="m2.300 3.500 7.700 4H2.500c-3 0-2.800-3.700-.2-4z" fill="#2ca0ee"/></svg></button>
      <button aria-label="Volume"><svg width="12" height="10" viewBox="0 0 12 10" fill="none" stroke="#fff" stroke-width=".9"><path d="M.5 3.500h2L5 1v8L2.500 6.500h-2zM6.500 3.500q1 1.500 0 3M8.300 2q2 3 0 6M10 .8q2.800 4.200 0 8.400"/></svg></button>
      <time>10:07 AM<br>4/23/2021</time>
      <button class="news" aria-label="Notifications"><svg width="12" height="12" viewBox="0 0 12 12"><path d="M.5.500h11v8.500H8L6 11 4 9H.5z" fill="none" stroke="#fff"/></svg></button>
    </div>
  `);

  define("share-notice", `
    :host {
      display: flex; align-items: center; width: 353px; height: 29px; padding: 0 7px;
      background: #fff; box-shadow: 0 1px 3px rgba(0, 0, 0, .5); white-space: nowrap; color: #555;
    }
    .grip { width: 5px; height: 8px; margin-right: 6px; border: 1px solid #ccc; border-width: 0 1px; }
    .stop { width: 71px; height: 22px; margin: 0 7px 0 auto; border-radius: 2px; background: #1a73e8; color: #fff; font-weight: 700; }
    a { color: #5b8dc9; }
  `, `
    <span class="grip"></span>
    <span>Screencastify - Screen Video Recorder is sharing your screen.</span>
    <button class="stop">Stop sharing</button>
    <a href="#">Hide</a>
  `);
})();
</script>
</body>
</html>
